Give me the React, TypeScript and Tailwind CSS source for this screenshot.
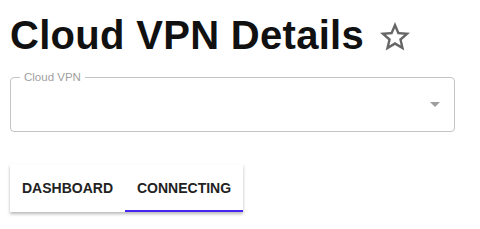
import React from 'react';

const StarOutline = () => (
  <svg width="36" height="36" viewBox="0 0 24 24" fill="currentColor">
    <path d="M22 9.24l-7.19-.62L12 2 9.19 8.63 2 9.24l5.46 4.73L5.82 21 12 17.27 18.18 21l-1.63-7.03L22 9.24zM12 15.4l-3.76 2.27 1-4.28-3.32-2.88 4.38-.38L12 6.1l1.71 4.04 4.38.38-3.32 2.88 1 4.28L12 15.4z" />
  </svg>
);

const tabs = ['Dashboard', 'Connecting'];

export default function App() {
  const active = 1;

  return (
    <div className="min-h-screen bg-white px-[10px] pt-[15px] font-['Liberation_Sans','Helvetica',sans-serif] text-[#111]">
      <div className="flex items-start">
        <h1 className="text-[40px] font-bold leading-[40px] tracking-[0.3px]">Cloud VPN Details</h1>
        <span className="ml-[13px] mt-[4px] text-[#666]">
          <StarOutline />
        </span>
      </div>

      <div className="relative mt-[22px] flex h-[55px] w-[445px] items-center justify-end rounded-[4px] border border-[#c4c4c4] pr-[14px]">
        <span className="absolute -top-[8px] left-[9px] bg-white px-[4px] text-[11.5px] leading-[14px] text-[#a0a0a0]">
          Cloud VPN
        </span>
        <span className="h-0 w-0 border-x-[5px] border-t-[5px] border-x-transparent border-t-[#9e9e9e]" />
      </div>

      <div className="mt-[32px] inline-flex h-[48px] bg-white shadow-[0_2px_3px_rgba(0,0,0,0.28)]">
        {tabs.map((t, i) => (
          <div
            key={t}
            className={`flex items-center border-b-2 px-[12px] pt-[2px] text-[14px] font-bold uppercase text-[#222] ${
              i === active ? 'border-[#4527f0]' : 'border-transparent'
            }`}
          >
            {t}
          </div>
        ))}
      </div>
    </div>
  );
}
